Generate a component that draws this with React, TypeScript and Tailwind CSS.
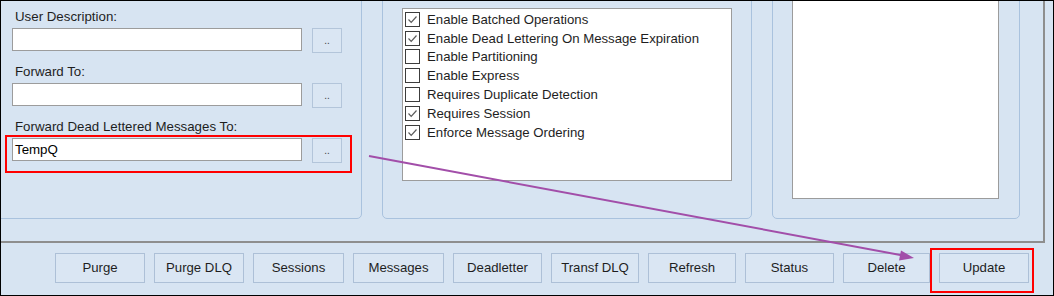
import React from 'react';

const font = "font-['Liberation_Sans',Arial,sans-serif]";

const options = [
  { label: 'Enable Batched Operations', checked: true },
  { label: 'Enable Dead Lettering On Message Expiration', checked: true },
  { label: 'Enable Partitioning', checked: false },
  { label: 'Enable Express', checked: false },
  { label: 'Requires Duplicate Detection', checked: false },
  { label: 'Requires Session', checked: true },
  { label: 'Enforce Message Ordering', checked: true },
];

// widths follow the original form, which isn't perfectly even
const buttons = [
  { label: 'Purge', w: 'w-[90px]' },
  { label: 'Purge DLQ', w: 'w-[90px]' },
  { label: 'Sessions', w: 'w-[91px]' },
  { label: 'Messages', w: 'w-[91px]' },
  { label: 'Deadletter', w: 'w-[89px]' },
  { label: 'Transf DLQ', w: 'w-[88px]' },
  { label: 'Refresh', w: 'w-[88px]' },
  { label: 'Status', w: 'w-[89px]' },
  { label: 'Delete', w: 'w-[87px]' },
  { label: 'Update', w: 'w-[90px]' },
];

function Field({ label, value, first }: { label: string; value?: string; first?: boolean }) {
  return (
    <div className={first ? '' : 'mt-[11px]'}>
      <div className="ml-[3px] h-[15px] leading-[15px] text-[13.3px] text-[#1e1e1e]">{label}</div>
      <div className="mt-[4px] flex h-[25px] items-start">
        <div className="flex h-[23px] w-[290px] items-center border border-[#9c9c9c] bg-white pl-[2px] text-[13.3px] text-black">
          {value}
        </div>
        <div className="ml-[10px] flex h-[25px] w-[30px] items-center justify-center border border-[#b3c5da] bg-[#dae6f3] text-[10px] text-[#444]">
          ..
        </div>
      </div>
    </div>
  );
}

function CheckBox({ checked }: { checked: boolean }) {
  return (
    <div className="flex h-[15px] w-[15px] shrink-0 items-center justify-center border border-[#3c3c3c] bg-white">
      {checked && (
        <svg width="11" height="11" viewBox="0 0 11 11">
          <path d="M1.5 5.5 L4.2 8.3 L9.5 2.5" fill="none" stroke="#5c5c5c" strokeWidth="1.2" />
        </svg>
      )}
    </div>
  );
}

export default function App() {
  return (
    <div className={`relative flex h-[296px] w-[1054px] flex-col overflow-hidden border border-black bg-[#d7e4f2] ${font}`}>
      {/* tab page */}
      <div className="h-[242px] w-[1044px] shrink-0 overflow-hidden border-b-2 border-r-2 border-[#8e8e8e]">
        <div className="-ml-[11px] -mt-[11px] flex gap-5">
          <div className="h-[229px] w-[372px] shrink-0 rounded-[5px] border border-[#a9c2de] pl-[21px] pt-[18px]">
            <Field label="User Description:" first />
            <Field label="Forward To:" />
            <Field label="Forward Dead Lettered Messages To:" value="TempQ" />
          </div>

          <div className="h-[229px] w-[370px] shrink-0 rounded-[5px] border border-[#a9c2de] pl-[19px] pt-[17px]">
            <div className="h-[173px] w-[330px] border border-[#9c9c9c] bg-white pl-[2px] pt-[1px]">
              {options.map((o) => (
                <div key={o.label} className="flex h-[18.8px] items-center gap-[7px]">
                  <CheckBox checked={o.checked} />
                  <span className="text-[13.2px] leading-[15px] text-[#1e1e1e]">{o.label}</span>
                </div>
              ))}
            </div>
          </div>

          <div className="h-[229px] w-[248px] shrink-0 rounded-[5px] border border-[#a9c2de] pl-[19px] pt-[8px]">
            <div className="h-[200px] w-[207px] border border-[#9c9c9c] bg-white" />
          </div>
        </div>
      </div>

      {/* command buttons */}
      <div className="flex gap-[9px] pl-[54px] pt-[10px]">
        {buttons.map((b) => (
          <div
            key={b.label}
            className={`flex h-[30px] shrink-0 items-center justify-center border border-[#adc0d7] bg-[#dae6f3] text-[13.2px] text-[#1e1e1e] ${b.w}`}
          >
            {b.label}
          </div>
        ))}
      </div>

      {/* annotations */}
      <div className="absolute left-[4px] top-[134px] h-[38px] w-[347px] border-2 border-[#ff0000]" />
      <div className="absolute left-[929px] top-[247px] h-[45px] w-[104px] border-2 border-[#ff0000]" />
      <svg className="absolute left-0 top-0" width="1054" height="296" viewBox="0 0 1054 296">
        <line x1="368" y1="155" x2="902" y2="254.5" stroke="#a24ea9" strokeWidth="2" />
        <polygon points="913,257 900,249.5 898,259.5" fill="#a24ea9" />
      </svg>
    </div>
  );
}
